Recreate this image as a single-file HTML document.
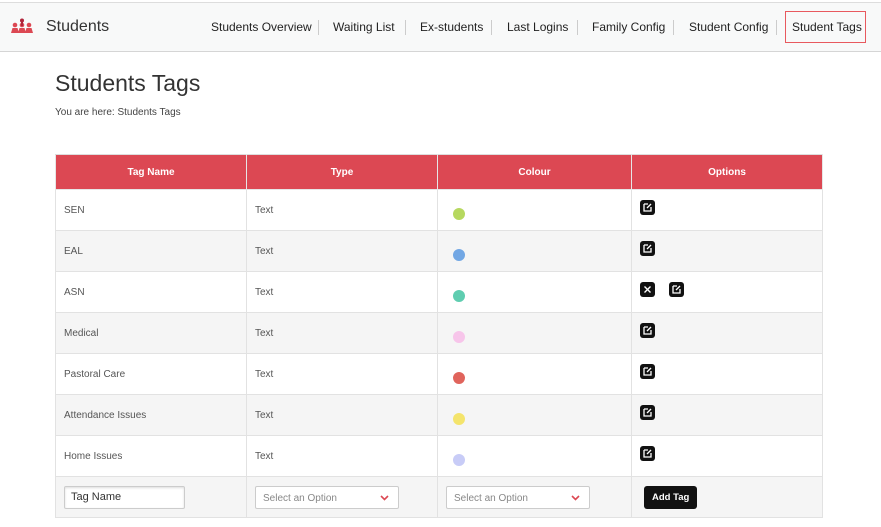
<!DOCTYPE html>
<html><head><style>
*{box-sizing:border-box;margin:0;padding:0}
body{width:881px;height:527px;background:#fff;font-family:"Liberation Sans",sans-serif;position:relative;overflow:hidden;color:#333}
.hdr{position:absolute;left:0;top:2px;width:881px;height:50px;background:#f8f9f9;border-top:1px solid #ddd;border-bottom:1px solid #d5d5d5}
.logo{position:absolute;left:46px;top:15px;font-size:16px;color:#333}
.nav{position:absolute;top:17px;font-size:12px;color:#222}
.sep{position:absolute;top:17px;width:1px;height:15px;background:#ccc}
.box{position:absolute;left:785px;top:8px;width:81px;height:32px;border:1.5px solid #e8595e}
h1{position:absolute;left:55px;top:70px;font-weight:normal;font-size:23px;color:#333}
.bc{position:absolute;left:55px;top:107px;font-size:10px;color:#444}
table{position:absolute;left:55px;top:154px;width:768px;border-collapse:collapse;font-size:10px}
th{background:#dc4853;color:#fff;height:35px;font-size:10px;font-weight:bold;border:1px solid #e6e6e6;border-top:1px solid #ddd}
td{height:41px;border:1px solid #e2e2e2;padding:0 8px;color:#555;vertical-align:middle}
tr:nth-child(odd) td{background:#f5f5f5}
.dot{display:inline-block;width:12px;height:12px;border-radius:50%;margin-top:10px;margin-left:7px}
.ic{display:inline-block;width:15px;height:15px;background:#111;border-radius:3px;position:relative;vertical-align:middle;margin-top:-4px}
.ic svg{position:absolute;left:0;top:0}
.inp{width:121px;height:23px;border:1px solid #ccc;border-radius:2px;background:#fff;font-size:11px;color:#333;padding:4px 6px;box-shadow:inset 0 1px 2px #ddd}
.sel{width:144px;height:23px;border:1px solid #ccc;border-radius:2px;background:#fff;font-size:10px;color:#888;padding:6px 7px;position:relative}
.sel svg{position:absolute;right:9px;top:8px}
.btn{display:inline-block;background:#111;color:#fff;font-weight:bold;font-size:9.5px;padding:6px 8px;border-radius:3px;margin-left:4px}
</style></head><body>
<div class="hdr">
<svg style="position:absolute;left:11px;top:15px" width="22" height="16" viewBox="0 0 22 16"><g fill="#dc4853"><circle cx="4" cy="7" r="2.3"/><path d="M0 15 L1.5 10 H6.5 L8 15Z"/><circle cx="18" cy="7" r="2.3"/><path d="M14 15 L15.5 10 H20.5 L22 15Z"/><circle cx="11" cy="7" r="2.3"/><path d="M7 15 L8.5 10 H13.5 L15 15Z"/></g><circle cx="11" cy="2.5" r="2" fill="#b0243a"/><rect x="10" y="3" width="2" height="5" fill="#b0243a"/></svg>
<div class="logo">Students</div>
<div class="nav" style="left:211px">Students Overview</div><div class="sep" style="left:318px"></div>
<div class="nav" style="left:333px">Waiting List</div><div class="sep" style="left:405px"></div>
<div class="nav" style="left:420px">Ex-students</div><div class="sep" style="left:491px"></div>
<div class="nav" style="left:507px">Last Logins</div><div class="sep" style="left:577px"></div>
<div class="nav" style="left:592px">Family Config</div><div class="sep" style="left:673px"></div>
<div class="nav" style="left:689px">Student Config</div><div class="sep" style="left:776px"></div>
<div class="nav" style="left:792px">Student Tags</div>
<div class="box"></div>
</div>
<h1>Students Tags</h1>
<div class="bc">You are here: Students Tags</div>
<table>
<tr><th style="width:191px">Tag Name</th><th style="width:191px">Type</th><th style="width:194px">Colour</th><th>Options</th></tr>
<tr><td>SEN</td><td>Text</td><td><span class="dot" style="background:#b6d85f"></span></td><td><span class="ic"><svg width="15" height="15"><path d="M4 4H8M4 4V11H11V7" stroke="#fff" stroke-width="1.3" fill="none"/><path d="M7 8L11 4" stroke="#fff" stroke-width="1.3"/></svg></span></td></tr>
<tr><td>EAL</td><td>Text</td><td><span class="dot" style="background:#72a7e4"></span></td><td><span class="ic"><svg width="15" height="15"><path d="M4 4H8M4 4V11H11V7" stroke="#fff" stroke-width="1.3" fill="none"/><path d="M7 8L11 4" stroke="#fff" stroke-width="1.3"/></svg></span></td></tr>
<tr><td>ASN</td><td>Text</td><td><span class="dot" style="background:#5fcdb0"></span></td><td><span class="ic"><svg width="15" height="15"><path d="M4.5 4.5L10.5 10.5M10.5 4.5L4.5 10.5" stroke="#fff" stroke-width="1.4"/></svg></span><span class="ic" style="margin-left:14px"><svg width="15" height="15"><path d="M4 4H8M4 4V11H11V7" stroke="#fff" stroke-width="1.3" fill="none"/><path d="M7 8L11 4" stroke="#fff" stroke-width="1.3"/></svg></span></td></tr>
<tr><td>Medical</td><td>Text</td><td><span class="dot" style="background:#f7c5ea"></span></td><td><span class="ic"><svg width="15" height="15"><path d="M4 4H8M4 4V11H11V7" stroke="#fff" stroke-width="1.3" fill="none"/><path d="M7 8L11 4" stroke="#fff" stroke-width="1.3"/></svg></span></td></tr>
<tr><td>Pastoral Care</td><td>Text</td><td><span class="dot" style="background:#e0645c"></span></td><td><span class="ic"><svg width="15" height="15"><path d="M4 4H8M4 4V11H11V7" stroke="#fff" stroke-width="1.3" fill="none"/><path d="M7 8L11 4" stroke="#fff" stroke-width="1.3"/></svg></span></td></tr>
<tr><td>Attendance Issues</td><td>Text</td><td><span class="dot" style="background:#f4e46c"></span></td><td><span class="ic"><svg width="15" height="15"><path d="M4 4H8M4 4V11H11V7" stroke="#fff" stroke-width="1.3" fill="none"/><path d="M7 8L11 4" stroke="#fff" stroke-width="1.3"/></svg></span></td></tr>
<tr><td>Home Issues</td><td>Text</td><td><span class="dot" style="background:#c8ccf7"></span></td><td><span class="ic"><svg width="15" height="15"><path d="M4 4H8M4 4V11H11V7" stroke="#fff" stroke-width="1.3" fill="none"/><path d="M7 8L11 4" stroke="#fff" stroke-width="1.3"/></svg></span></td></tr>
<tr><td><div class="inp">Tag Name</div></td><td><div class="sel">Select an Option<svg width="9" height="6"><path d="M1 1L4.5 4.5L8 1" stroke="#dc4853" stroke-width="1.6" fill="none"/></svg></div></td><td><div class="sel">Select an Option<svg width="9" height="6"><path d="M1 1L4.5 4.5L8 1" stroke="#dc4853" stroke-width="1.6" fill="none"/></svg></div></td><td><span class="btn">Add Tag</span></td></tr>
</table>
</body></html>
